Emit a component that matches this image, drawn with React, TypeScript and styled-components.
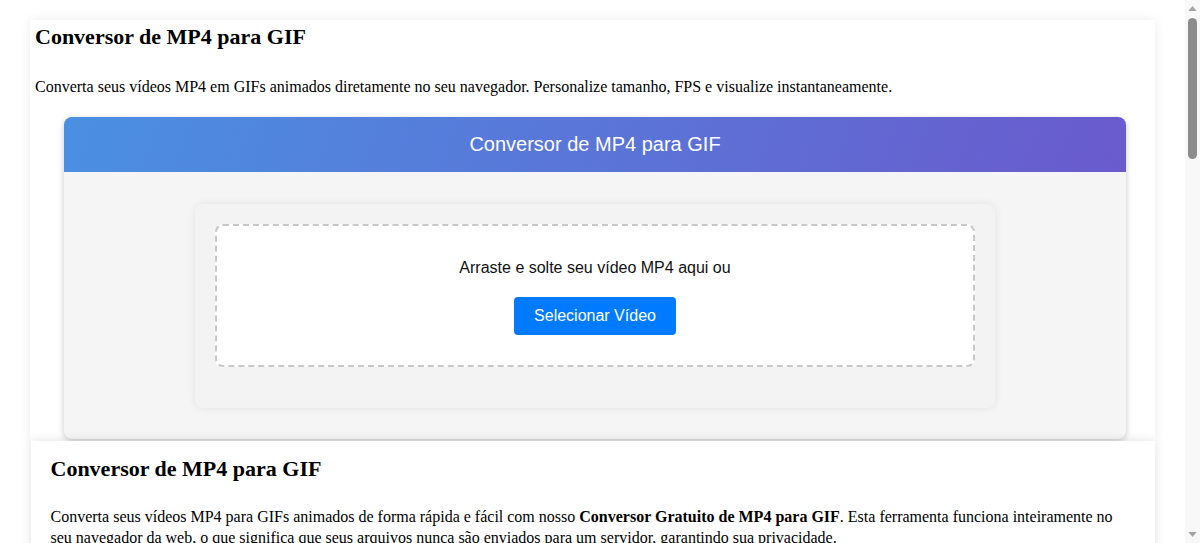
import styled, { createGlobalStyle } from 'styled-components';

const GlobalStyle = createGlobalStyle`
  html, body {
    margin: 0;
    padding: 0;
    background: #fff;
  }
  body {
    font-family: "Liberation Serif", "Times New Roman", serif;
    color: #000;
    width: 1185px;
  }
`;

// fake classic scrollbar, the screenshot shows one on the right
const ScrollBar = () => (
  <S_ScrollTrack>
    <S_Arrow viewBox="0 0 10 6">
      <polygon points="0,6 10,6 5,0" />
    </S_Arrow>
    <S_ScrollThumb />
    <S_ScrollSpacer />
    <S_Arrow viewBox="0 0 10 6">
      <polygon points="0,0 10,0 5,6" />
    </S_Arrow>
  </S_ScrollTrack>
);

const App = () => {
  return (
    <>
      <GlobalStyle />
      <ScrollBar />
      <S_Page>
        <S_TopCard>
          <S_Title>Conversor de MP4 para GIF</S_Title>
          <S_Intro>
            Converta seus vídeos MP4 em GIFs animados diretamente no seu navegador. Personalize tamanho, FPS e
            visualize instantaneamente.
          </S_Intro>
          <S_Tool>
            <S_ToolHeader>Conversor de MP4 para GIF</S_ToolHeader>
            <S_ToolBody>
              <S_UploadBox>
                <S_DropZone>
                  <S_DropText>Arraste e solte seu vídeo MP4 aqui ou</S_DropText>
                  <S_Button type="button">Selecionar Vídeo</S_Button>
                </S_DropZone>
              </S_UploadBox>
            </S_ToolBody>
          </S_Tool>
        </S_TopCard>

        <S_InfoCard>
          <S_InfoTitle>Conversor de MP4 para GIF</S_InfoTitle>
          <S_InfoText>
            Converta seus vídeos MP4 para GIFs animados de forma rápida e fácil com nosso{' '}
            <b>Conversor Gratuito de MP4 para GIF</b>. Esta ferramenta funciona inteiramente no seu navegador da web,
            o que significa que seus arquivos nunca são enviados para um servidor, garantindo sua privacidade.
          </S_InfoText>
          <S_InfoText>
            Ajuste a largura, a taxa de quadros (FPS) e o intervalo de tempo do vídeo, visualize o resultado e baixe o
            seu GIF com apenas um clique.
          </S_InfoText>
          <S_InfoSub>Como usar</S_InfoSub>
          <S_InfoText>
            1. Selecione ou arraste um vídeo MP4. 2. Escolha as configurações desejadas. 3. Clique em converter e
            baixe o GIF gerado.
          </S_InfoText>
        </S_InfoCard>
      </S_Page>
    </>
  );
};
export default App;

const S_ScrollTrack = styled.div`
  position: fixed;
  top: 0;
  right: 0;
  width: 15px;
  height: 100vh;
  background: #f8f8f8;
  display: flex;
  flex-direction: column;
  align-items: center;
  z-index: 10;
`;

const S_Arrow = styled.svg`
  width: 9px;
  height: 5px;
  margin: 6px 0;
  fill: #a3a3a3;
`;

const S_ScrollThumb = styled.div`
  width: 9px;
  height: 141px;
  margin-top: 1px;
  border-radius: 5px;
  background: #8c8c8c;
`;

const S_ScrollSpacer = styled.div`
  flex: 1;
`;

const S_Page = styled.div`
  width: 1125px;
  margin: 20px auto 40px;
`;

const S_TopCard = styled.section`
  background: #fff;
  padding: 4px 0 2px 5px;
  box-shadow: 0 0 10px rgba(0, 0, 0, 0.08);
`;

const S_Title = styled.h2`
  font-size: 22px;
  font-weight: bold;
  margin: 0 0 28px;
`;

const S_Intro = styled.p`
  font-size: 16px;
  margin: 0 0 21px;
`;

const S_Tool = styled.div`
  width: 1062px;
  margin-left: 29px;
  border-radius: 8px;
  overflow: hidden;
  background: #f5f5f5;
  box-shadow: 0 2px 6px rgba(0, 0, 0, 0.22);
  font-family: "Liberation Sans", Arial, sans-serif;
`;

const S_ToolHeader = styled.div`
  height: 55px;
  display: flex;
  align-items: center;
  justify-content: center;
  background: linear-gradient(110deg, #4a90e2 0%, #6a5acd 100%);
  color: #fff;
  font-size: 20px;
`;

const S_ToolBody = styled.div`
  display: flex;
  justify-content: center;
  padding: 32px 0 31px;
`;

const S_UploadBox = styled.div`
  width: 800px;
  box-sizing: border-box;
  padding: 20px 20px 41px;
  background: #f3f3f3;
  border-radius: 8px;
  box-shadow: 0 0 8px rgba(0, 0, 0, 0.08);
`;

const S_DropZone = styled.div`
  display: flex;
  flex-direction: column;
  align-items: center;
  padding: 33px 20px 30px;
  background: #fff;
  border: 2px dashed #c8c8c8;
  border-radius: 8px;
`;

const S_DropText = styled.p`
  margin: 0 0 20px;
  font-size: 16px;
  color: #111;
`;

const S_Button = styled.button`
  padding: 10px 20px;
  border: none;
  border-radius: 4px;
  background: #007bff;
  color: #fff;
  font-family: "Liberation Sans", Arial, sans-serif;
  font-size: 16px;
  line-height: 18px;
  cursor: pointer;
`;

const S_InfoCard = styled.section`
  width: 1124px;
  box-sizing: border-box;
  margin: 0 auto;
  padding: 15px 20px 20px;
  background: #fff;
  box-shadow: 0 0 10px rgba(0, 0, 0, 0.12);
`;

const S_InfoTitle = styled.h2`
  font-size: 22px;
  font-weight: bold;
  margin: 0 0 24px;
`;

const S_InfoSub = styled.h3`
  font-size: 19px;
  margin: 20px 0 12px;
`;

const S_InfoText = styled.p`
  font-size: 16px;
  line-height: 21px;
  margin: 0 0 14px;
`;
